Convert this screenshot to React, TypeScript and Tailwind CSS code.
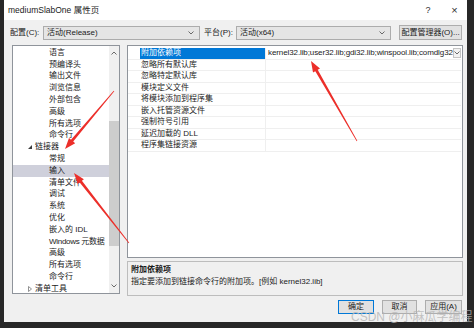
import React from 'react'

type TreeItem = {
  label: string
  level: 1 | 2
  open?: boolean
  selected?: boolean
}

const treeItems: TreeItem[] = [
  { label: '语言', level: 2 },
  { label: '预编译头', level: 2 },
  { label: '输出文件', level: 2 },
  { label: '浏览信息', level: 2 },
  { label: '外部包含', level: 2 },
  { label: '高级', level: 2 },
  { label: '所有选项', level: 2 },
  { label: '命令行', level: 2 },
  { label: '链接器', level: 1, open: true },
  { label: '常规', level: 2 },
  { label: '输入', level: 2, selected: true },
  { label: '清单文件', level: 2 },
  { label: '调试', level: 2 },
  { label: '系统', level: 2 },
  { label: '优化', level: 2 },
  { label: '嵌入的 IDL', level: 2 },
  { label: 'Windows 元数据', level: 2 },
  { label: '高级', level: 2 },
  { label: '所有选项', level: 2 },
  { label: '命令行', level: 2 },
  { label: '清单工具', level: 1, open: false },
]

const props = [
  '附加依赖项',
  '忽略所有默认库',
  '忽略特定默认库',
  '模块定义文件',
  '将模块添加到程序集',
  '嵌入托管资源文件',
  '强制符号引用',
  '延迟加载的 DLL',
  '程序集链接资源',
]

function Chevron({ up = false }: { up?: boolean }) {
  return (
    <svg width="6" height="4" viewBox="0 0 6 4" className="shrink-0">
      <path
        d={up ? 'M0.5 3.5 L3 1 L5.5 3.5' : 'M0.5 0.5 L3 3 L5.5 0.5'}
        fill="none"
        stroke="#5a5a5a"
        strokeWidth="0.9"
      />
    </svg>
  )
}

function Select({ text, width }: { text: string; width: string }) {
  return (
    <div
      className={`${width} h-[14px] shrink-0 flex items-center justify-between border border-[#acacac] bg-[#e5e5e5] pl-[3px] pr-[5px]`}
    >
      <span className="whitespace-nowrap">{text}</span>
      <Chevron />
    </div>
  )
}

// tapered red annotation arrow, tail -> tip
function arrowPoints(x1: number, y1: number, x2: number, y2: number) {
  const dx = x2 - x1
  const dy = y2 - y1
  const len = Math.hypot(dx, dy)
  const ux = dx / len
  const uy = dy / len
  const px = -uy
  const py = ux
  const headLen = 11
  const bx = x2 - ux * headLen
  const by = y2 - uy * headLen
  const pts = [
    [x1 + px * 0.4, y1 + py * 0.4],
    [bx + px * 1.4, by + py * 1.4],
    [bx + px * 4, by + py * 4],
    [x2, y2],
    [bx - px * 4, by - py * 4],
    [bx - px * 1.4, by - py * 1.4],
    [x1 - px * 0.4, y1 - py * 0.4],
  ]
  return pts.map((p) => p.map((v) => v.toFixed(1)).join(',')).join(' ')
}

export default function App() {
  return (
    <div className="relative w-[474px] h-[328px] bg-[#272727] overflow-hidden font-['Liberation_Sans','Noto_Sans_CJK_SC',sans-serif] text-[8px] text-[#1b1b1b] leading-none">
      <div className="ml-[4px] w-[463px] h-[322px] bg-[#f0f0f0] flex flex-col">
        {/* title bar */}
        <div className="h-[20px] bg-white flex items-center pl-[4px]">
          <span className="text-[8.5px] whitespace-nowrap">mediumSlabOne 属性页</span>
          <span className="ml-auto w-[28px] text-center text-[9px] text-[#333]">?</span>
          <span className="w-[25px] text-center text-[11px] text-[#333]">×</span>
        </div>

        {/* config row */}
        <div className="h-[25px] flex items-center pl-[6px] whitespace-nowrap">
          <span className="w-[33px] shrink-0">配置(C):</span>
          <Select text="活动(Release)" width="w-[157px]" />
          <span className="w-[32px] shrink-0 ml-[4px]">平台(P):</span>
          <Select text="活动(x64)" width="w-[155px]" />
          <div className="ml-[8px] w-[63px] h-[15px] shrink-0 flex items-center justify-center border border-[#adadad] bg-[#e1e1e1]">
            配置管理器(O)...
          </div>
        </div>

        {/* body */}
        <div className="h-[251px] flex pl-[8px] gap-[7px]">
          {/* tree */}
          <div className="w-[108px] h-[249px] flex border border-[#8f949b] bg-white">
            <div className="flex-1 pt-[1px] overflow-hidden">
              {treeItems.map((it, i) => (
                <div
                  key={i}
                  className={`h-[11.8px] flex items-center whitespace-nowrap ${
                    it.selected ? 'bg-[#cfd0db]' : ''
                  } ${it.level === 2 ? 'pl-[36px]' : 'pl-[15px]'}`}
                >
                  {it.level === 1 && (
                    <span className="w-[7px] flex items-center">
                      {it.open ? (
                        <svg width="4" height="4" viewBox="0 0 4 4">
                          <polygon points="4,0 4,4 0,4" fill="#3c3c3c" />
                        </svg>
                      ) : (
                        <svg width="4" height="6" viewBox="0 0 4 6">
                          <polygon points="0.5,0.5 3.5,3 0.5,5.5" fill="none" stroke="#777" strokeWidth="0.8" />
                        </svg>
                      )}
                    </span>
                  )}
                  <span className={it.label.startsWith('Windows') ? 'tracking-[-0.3px]' : ''}>{it.label}</span>
                </div>
              ))}
            </div>
            {/* scrollbar */}
            <div className="w-[10px] flex flex-col bg-[#f0f0f0]">
              <div className="h-[14px] flex items-center justify-center">
                <Chevron up />
              </div>
              <div className="h-[61px]" />
              <div className="h-[125px] bg-[#cdcdcd]" />
              <div className="flex-1" />
              <div className="h-[14px] flex items-center justify-center">
                <Chevron />
              </div>
            </div>
          </div>

          {/* right column */}
          <div className="w-[336px] flex flex-col gap-[3px]">
            <div className="h-[213px] border border-[#8f949b] bg-white pt-[2px] pr-[1px]">
              {props.map((p, i) => (
                <div key={i} className="h-[11.5px] flex border-b border-[#efefef]">
                  <div className="w-[12px]" />
                  <div className="w-[126px] h-full flex items-center border-r border-[#efefef]">
                    <div
                      className={`w-full h-full flex items-center pl-[1px] ${
                        i === 0 ? 'bg-[#0078d7] text-white' : ''
                      }`}
                    >
                      {p}
                    </div>
                  </div>
                  <div className="flex-1 min-w-0 flex items-center pl-[2px]">
                    {i === 0 && (
                      <>
                        <span className="flex-1 whitespace-nowrap tracking-[-0.1px]">
                          kernel32.lib;user32.lib;gdi32.lib;winspool.lib;comdlg32
                        </span>
                        <div className="w-[8px] h-[10px] shrink-0 flex items-center justify-center border border-[#c4c4c4] bg-[#f2f2f2]">
                          <Chevron />
                        </div>
                      </>
                    )}
                  </div>
                </div>
              ))}
            </div>
            <div className="h-[35px] border border-[#bdbdbd] bg-[#f0f0f0] pl-[3px] pt-[4px] flex flex-col gap-[4px]">
              <span className="font-bold">附加依赖项</span>
              <span>指定要添加到链接命令行的附加项。[例如 kernel32.lib]</span>
            </div>
          </div>
        </div>

        {/* buttons */}
        <div className="flex justify-end gap-[8px] pr-[5px] pt-[4px]">
          <div className="w-[36px] h-[14px] flex items-center justify-center border border-[#0078d7] bg-[#e1e1e1]">
            确定
          </div>
          <div className="w-[35px] h-[14px] flex items-center justify-center border border-[#adadad] bg-[#e1e1e1]">
            取消
          </div>
          <div className="w-[37px] h-[14px] flex items-center justify-center border border-[#adadad] bg-[#e1e1e1]">
            应用(A)
          </div>
        </div>
      </div>

      {/* watermark */}
      <div className="absolute left-[351px] top-[311px] text-[12px] text-[#b4b4b4]/80 whitespace-nowrap">
        CSDN @小麻瓜学编程
      </div>

      {/* annotation arrows */}
      <svg className="absolute inset-0 pointer-events-none" width="474" height="328">
        <polygon points={arrowPoints(114, 91, 65, 149)} fill="#ec2f2a" />
        <polygon points={arrowPoints(129, 243, 74, 173)} fill="#ec2f2a" />
        <polygon points={arrowPoints(357, 141, 311, 61)} fill="#ec2f2a" />
      </svg>
    </div>
  )
}
